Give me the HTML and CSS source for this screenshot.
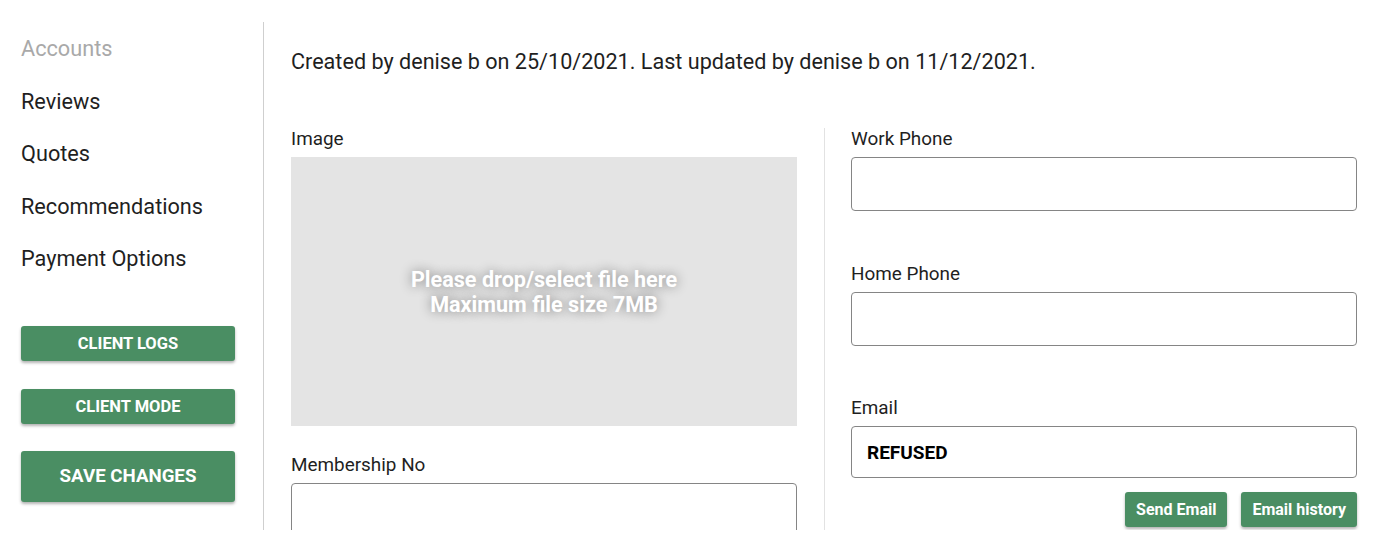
FILE: index.html
```html
<!DOCTYPE html>
<html lang="en">

<head>
    <meta charset="UTF-8">
    <title>Client details</title>
    <link rel="stylesheet" href="styles.css">
</head>

<body>
    <div class="page">
        <div class="sidebar">
            <ul class="side-nav">
                <li class="disabled">Accounts</li>
                <li>Reviews</li>
                <li>Quotes</li>
                <li>Recommendations</li>
                <li>Payment Options</li>
            </ul>
            <div class="side-actions">
                <button class="btn btn-small" type="button">CLIENT LOGS</button>
                <button class="btn btn-small" type="button">CLIENT MODE</button>
                <button class="btn btn-large" type="button">SAVE CHANGES</button>
            </div>
        </div>

        <div class="main">
            <p class="audit">Created by denise b on 25/10/2021. Last updated by denise b on 11/12/2021.</p>

            <div class="columns">
                <div class="col col-left">
                    <label class="field-label">Image</label>
                    <div class="dropzone">
                        <span>Please drop/select file here</span>
                        <span>Maximum file size 7MB</span>
                    </div>

                    <div class="field field-membership">
                        <label class="field-label">Membership No</label>
                        <input class="text-input" type="text">
                    </div>
                </div>

                <div class="col col-right">
                    <div class="field field-work">
                        <label class="field-label">Work Phone</label>
                        <input class="text-input" type="text">
                    </div>
                    <div class="field">
                        <label class="field-label">Home Phone</label>
                        <input class="text-input" type="text">
                    </div>
                    <div class="field field-email">
                        <label class="field-label">Email</label>
                        <input class="text-input text-strong" type="text" value="REFUSED">
                    </div>
                    <div class="email-actions">
                        <button class="btn btn-mini" type="button">Send Email</button>
                        <button class="btn btn-mini" type="button">Email history</button>
                    </div>
                </div>
            </div>
        </div>
    </div>
</body>

</html>
```

FILE: styles.css
```css
body {
    margin: 0;
    background: #fff;
    color: #1f1f1f;
    font-family: Roboto, "Liberation Sans", Arial, sans-serif;
}

.page {
    display: flex;
    height: 508px;
    margin-top: 22px;
    overflow: hidden;
}

/* left menu */
.sidebar {
    width: 242px;
    padding-left: 21px;
    border-right: 1px solid #cfcfcf;
    flex-shrink: 0;
}

.side-nav {
    list-style: none;
    margin: 0;
    padding: 0;
}

.side-nav li {
    font-size: 21.7px;
    line-height: 24.5px;
    padding: 15px 0 13px;
    color: #1f1f1f;
}

.side-nav li.disabled {
    color: #a9a9a9;
}

.side-actions {
    display: flex;
    flex-direction: column;
    width: 214px;
    margin-top: 41px;
}

.btn {
    border: none;
    border-radius: 3px;
    background-color: #4a8e63;
    color: #fff;
    font-family: Roboto, "Liberation Sans", Arial, sans-serif;
    font-weight: 700;
    cursor: pointer;
    box-shadow: 0 2px 3px rgba(0, 0, 0, 0.3);
}

.btn-small {
    height: 35px;
    font-size: 16.5px;
    margin-bottom: 28px;
}

.btn-small + .btn-small {
    margin-bottom: 27px;
}

.btn-large {
    height: 51px;
    font-size: 18.7px;
}

.btn-mini {
    height: 35px;
    padding: 0 11px;
    font-size: 16px;
}

/* main area */
.main {
    flex: 1;
    padding: 0 19px 0 27px;
}

.audit {
    margin: 28px 0 54px;
    font-size: 21.6px;
    line-height: 24px;
}

.columns {
    display: flex;
    height: 100%;
}

.col-left {
    width: 506px;
    padding-right: 27px;
    flex-shrink: 0;
}

.col-right {
    flex: 1;
    padding-left: 26px;
    border-left: 1px solid #e2e2e2;
}

.field-label {
    display: block;
    font-size: 18.9px;
    line-height: 22px;
    margin-bottom: 7px;
}

.dropzone {
    height: 269px;
    background-color: #e4e4e4;
    display: flex;
    flex-direction: column;
    align-items: center;
    justify-content: center;
    color: #fff;
    font-size: 21.6px;
    font-weight: 700;
    line-height: 25px;
    text-shadow: 0 0 12px rgba(0, 0, 0, 0.45);
}

.field-membership {
    margin-top: 28px;
}

.text-input {
    display: block;
    box-sizing: border-box;
    width: 100%;
    height: 54px;
    padding: 0 15px;
    border: 1px solid #858585;
    border-radius: 4px;
    background: #fff;
    font-family: Roboto, "Liberation Sans", Arial, sans-serif;
    font-size: 19px;
    color: #000;
}

.field {
    margin-bottom: 51px;
}

.field-work {
    margin-bottom: 52px;
}

.field-email {
    margin-bottom: 0;
}

.field-email .text-input {
    height: 52px;
}

.text-strong {
    font-weight: 700;
}

.email-actions {
    display: flex;
    justify-content: flex-end;
    gap: 14px;
    margin-top: 14px;
}
```
